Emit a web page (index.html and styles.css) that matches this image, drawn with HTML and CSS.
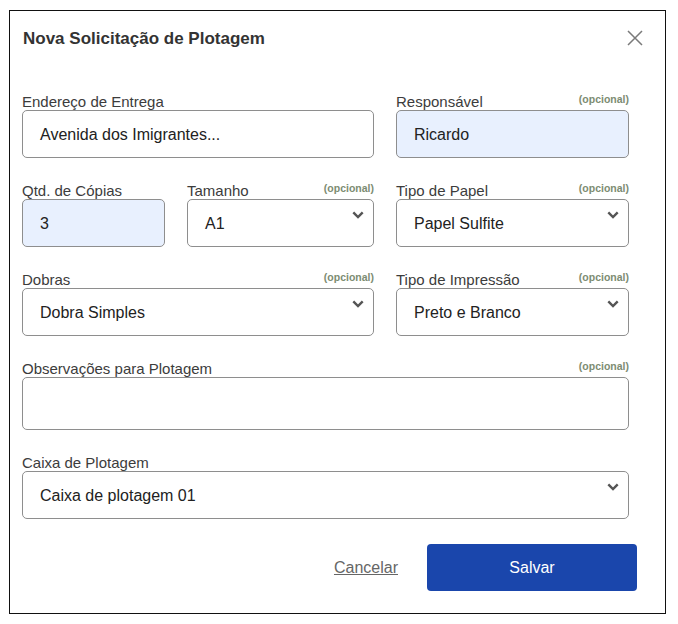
FILE: index.html
```html
<!DOCTYPE html>
<html lang="pt-BR">
<head>
<meta charset="utf-8">
<title>Nova Solicitação de Plotagem</title>
<link rel="stylesheet" href="styles.css">
</head>
<body>
<div class="modal">
  <div class="header">
    <h1 class="title">Nova Solicitação de Plotagem</h1>
    <button class="close" aria-label="Fechar">
      <svg width="16" height="16" viewBox="0 0 16 16"><path d="M1 1 L15 15 M15 1 L1 15" stroke="#7a7a7a" stroke-width="1.5" fill="none"/></svg>
    </button>
  </div>
  <div class="form">
    <div class="field span2">
      <div class="label"><span>Endereço de Entrega</span></div>
      <div class="control">Avenida dos Imigrantes...</div>
    </div>
    <div class="field">
      <div class="label"><span>Responsável</span><span class="opt">(opcional)</span></div>
      <div class="control filled">Ricardo</div>
    </div>

    <div class="field">
      <div class="label"><span>Qtd. de Cópias</span></div>
      <div class="control filled">3</div>
    </div>
    <div class="field">
      <div class="label"><span>Tamanho</span><span class="opt">(opcional)</span></div>
      <div class="control select"><span>A1</span><svg class="chev" width="12" height="8" viewBox="0 0 12 8"><path d="M1.3 1.3 L6 6 L10.7 1.3" stroke="#555" stroke-width="2.4" fill="none"/></svg></div>
    </div>
    <div class="field">
      <div class="label"><span>Tipo de Papel</span><span class="opt">(opcional)</span></div>
      <div class="control select"><span>Papel Sulfite</span><svg class="chev" width="12" height="8" viewBox="0 0 12 8"><path d="M1.3 1.3 L6 6 L10.7 1.3" stroke="#555" stroke-width="2.4" fill="none"/></svg></div>
    </div>

    <div class="field span2">
      <div class="label"><span>Dobras</span><span class="opt">(opcional)</span></div>
      <div class="control select"><span>Dobra Simples</span><svg class="chev" width="12" height="8" viewBox="0 0 12 8"><path d="M1.3 1.3 L6 6 L10.7 1.3" stroke="#555" stroke-width="2.4" fill="none"/></svg></div>
    </div>
    <div class="field">
      <div class="label"><span>Tipo de Impressão</span><span class="opt">(opcional)</span></div>
      <div class="control select"><span>Preto e Branco</span><svg class="chev" width="12" height="8" viewBox="0 0 12 8"><path d="M1.3 1.3 L6 6 L10.7 1.3" stroke="#555" stroke-width="2.4" fill="none"/></svg></div>
    </div>

    <div class="field span3">
      <div class="label"><span>Observações para Plotagem</span><span class="opt">(opcional)</span></div>
      <div class="control textarea"></div>
    </div>

    <div class="field span3">
      <div class="label"><span>Caixa de Plotagem</span></div>
      <div class="control select"><span>Caixa de plotagem 01</span><svg class="chev" width="12" height="8" viewBox="0 0 12 8"><path d="M1.3 1.3 L6 6 L10.7 1.3" stroke="#555" stroke-width="2.4" fill="none"/></svg></div>
    </div>
  </div>
  <div class="footer">
    <a class="cancel" href="#">Cancelar</a>
    <button class="save">Salvar</button>
  </div>
</div>
</body>
</html>
```
FILE: styles.css
```css
* { box-sizing: border-box; }
html, body { margin: 0; padding: 0; background: #fff; }
body {
  font-family: "Liberation Sans", Arial, sans-serif;
  padding: 10px 0 0 9px;
}
.modal {
  width: 657px;
  height: 604px;
  border: 1px solid #111;
  background: #fff;
  padding: 0 36px 0 12px;
}
.header {
  display: flex;
  justify-content: space-between;
  align-items: flex-start;
  padding-top: 18px;
  height: 81px;
}
.title {
  margin: 0;
  font-size: 17px;
  line-height: 20px;
  font-weight: bold;
  color: #333;
  padding-left: 1px;
}
.close {
  border: 0;
  background: none;
  padding: 0;
  margin: 1px -14px 0 0;
  width: 16px;
  height: 16px;
  display: block;
}
.close svg { display: block; }
.form {
  display: grid;
  grid-template-columns: 143px 187px 233px;
  column-gap: 22px;
  row-gap: 23px;
}
.field { display: flex; flex-direction: column; min-width: 0; }
.span2 { grid-column: span 2; }
.span3 { grid-column: span 3; }
.label {
  display: flex;
  justify-content: space-between;
  align-items: flex-start;
  height: 18px;
  line-height: 19px;
  font-size: 15px;
  color: #3c3c3c;
}
.opt {
  font-size: 10.5px;
  line-height: 14px;
  font-weight: bold;
  color: #7d8c72;
}
.control {
  height: 48px;
  border: 1px solid #8e8e8e;
  border-radius: 5px;
  display: flex;
  align-items: center;
  justify-content: space-between;
  padding: 1px 9px 0 17px;
  font-size: 16px;
  color: #222;
  background: #fff;
}
.control.filled { background: #e8f0fe; }
.control.textarea { height: 53px; }
.chev {
  align-self: flex-start;
  margin-top: 10px;
  flex: none;
}
.footer {
  display: flex;
  justify-content: flex-end;
  align-items: center;
  margin-top: 25px;
  margin-right: -8px;
}
.cancel {
  font-size: 16px;
  color: #666;
  text-decoration: underline;
  margin-right: 29px;
}
.save {
  width: 210px;
  height: 47px;
  border: 0;
  border-radius: 4px;
  background: #1a46ac;
  color: #fff;
  font-family: "Liberation Sans", Arial, sans-serif;
  font-size: 16px;
}
```
